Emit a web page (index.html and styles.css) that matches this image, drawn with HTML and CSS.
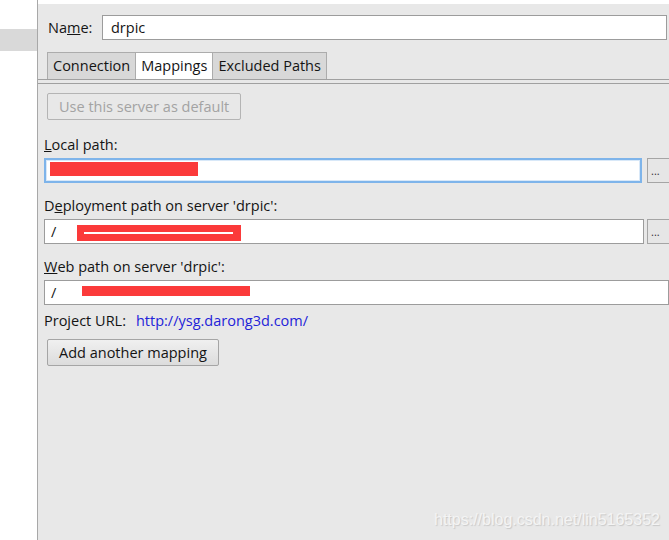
FILE: index.html
```html
<!DOCTYPE html>
<html lang="en">
<head>
    <meta charset="UTF-8">
    <title>Deployment - drpic</title>
    <link rel="stylesheet" href="styles.css">
</head>
<body>
    <div class="sidebar">
        <div class="sidebar-item"></div>
    </div>

    <div class="panel">
        <div class="name-row">
            <label class="name-label">Na<u>m</u>e:</label>
            <div class="field name-field">drpic</div>
        </div>

        <div class="tabs">
            <div class="tab">Connection</div>
            <div class="tab active">Mappings</div>
            <div class="tab">Excluded Paths</div>
        </div>
        <div class="tab-line"></div>

        <div class="content">
            <button class="btn default-btn" disabled>Use this server as default</button>

            <div class="label first"><u>L</u>ocal path:</div>
            <div class="path-row">
                <div class="field focused">
                    <span class="redact redact-local"></span>
                </div>
                <button class="browse">...</button>
            </div>

            <div class="label">D<u>e</u>ployment path on server 'drpic':</div>
            <div class="path-row">
                <div class="field">
                    /
                    <span class="redact redact-deploy"><span class="redact-line"></span></span>
                </div>
                <button class="browse">...</button>
            </div>

            <div class="label"><u>W</u>eb path on server 'drpic':</div>
            <div class="path-row">
                <div class="field wide">
                    /
                    <span class="redact redact-web"></span>
                </div>
            </div>

            <div class="url-row">
                <span>Project URL:</span>
                <a class="url" href="#">http://ysg.darong3d.com/</a>
            </div>

            <button class="btn add-btn">Add another mapping</button>
        </div>

        <div class="watermark">https://blog.csdn.net/lin5165352</div>
    </div>
</body>
</html>
```

FILE: styles.css
```css
body {
    margin: 0;
    width: 669px;
    height: 540px;
    display: flex;
    background: #fff;
    font-family: 'Open Sans', 'Noto Sans', sans-serif;
    font-size: 14.5px;
    color: #141414;
    overflow: hidden;
}

.sidebar {
    width: 37px;
    background: #fff;
    border-right: 1px solid #a8a8a8;
}

.sidebar-item {
    margin-top: 29px;
    height: 22px;
    background: #d9d9d9;
}

.panel {
    position: relative;
    flex: 1;
    margin-top: 4px;
    background: #e8e8e8;
}

.name-row {
    display: flex;
    align-items: center;
    margin: 11px 2px 0 10px;
}

.name-label {
    width: 54px;
}

.field {
    position: relative;
    flex: 1;
    height: 23px;
    line-height: 23px;
    padding: 0 6px;
    background: #fff;
    border: 1px solid #9c9c9c;
}

.name-field {
    padding-left: 8px;
}

.tabs {
    display: flex;
    margin: 12px 0 0 9px;
}

.tab {
    height: 26px;
    line-height: 26px;
    padding: 0 5px;
    background: #d8d8d8;
    border: 1px solid #acacac;
    border-bottom: none;
}

.tab + .tab {
    border-left: none;
}

.tab.active {
    background: #fff;
}

.tab-line {
    height: 3px;
    border-top: 1px solid #a0a0a0;
    border-bottom: 1px solid #a0a0a0;
}

.content {
    padding: 9px 0 0 6px;
}

.btn {
    display: block;
    height: 27px;
    padding: 0 11px;
    margin-left: 3px;
    font-family: inherit;
    font-size: 14.5px;
    color: #141414;
    background: linear-gradient(#f0f0f0, #dcdcdc);
    border: 1px solid #a5a5a5;
    border-radius: 2px;
}

.btn:disabled {
    color: #a3a3a3;
    background: #e8e8e8;
    border-color: #b4b4b4;
}

.label {
    margin-top: 13px;
    height: 23px;
    line-height: 20px;
}

.label.first {
    margin-top: 15px;
}

.path-row {
    display: flex;
    gap: 3px;
}

.field.focused {
    border: 2px solid #7eb4ea;
    box-shadow: inset 0 0 0 1px #d8e8f8;
    height: 21px;
    margin-right: 2px;
}

.browse {
    width: 22px;
    height: 25px;
    padding: 0 0 0 3px;
    font-family: inherit;
    font-size: 11px;
    color: #333;
    background: #e6e6e6;
    border: 1px solid #a5a5a5;
    border-right: none;
    text-align: left;
}

.redact {
    position: absolute;
    background: #fb3a3a;
}

.redact-local {
    left: 4px;
    top: 2px;
    width: 148px;
    height: 14px;
}

.redact-deploy {
    left: 32px;
    top: 5px;
    width: 164px;
    height: 16px;
}

.redact-line {
    position: absolute;
    left: 7px;
    right: 8px;
    top: 7px;
    height: 2px;
    background: #fff;
}

.redact-web {
    left: 37px;
    top: 5px;
    width: 168px;
    height: 10px;
}

.url-row {
    margin-top: 6px;
    display: flex;
    gap: 10px;
}

.url {
    color: #2323d8;
    text-decoration: none;
}

.add-btn {
    margin-top: 9px;
}

.watermark {
    position: absolute;
    left: 396px;
    top: 507px;
    font-family: 'Liberation Sans', Arial, sans-serif;
    font-size: 16px;
    color: #f4f4f4;
    text-shadow: 1px 1px 1px #c8c8c8;
}
```
